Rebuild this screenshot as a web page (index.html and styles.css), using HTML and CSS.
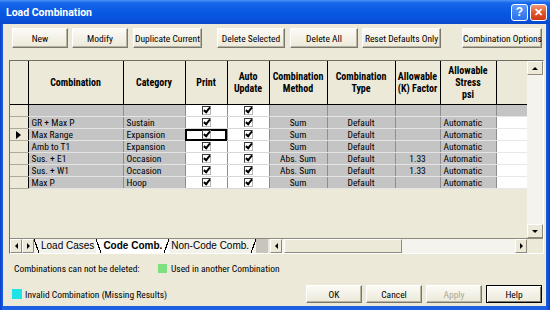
FILE: index.html
```html
<!DOCTYPE html>
<html>
<head>
    <title>Load Combination</title>
    <link rel="stylesheet" href="styles.css">
</head>
<body>
<div class="window">
    <div class="titlebar">
        <span class="title">Load Combination</span>
        <span class="cap cap-help">?</span>
        <span class="cap cap-close">&#x2715;</span>
    </div>
    <div class="client">
        <div class="toolbar">
            <button class="btn b-new">New</button>
            <button class="btn b-modify">Modify</button>
            <button class="btn b-dup">Duplicate Current</button>
            <button class="btn b-delsel">Delete Selected</button>
            <button class="btn b-delall">Delete All</button>
            <button class="btn b-reset">Reset Defaults Only</button>
            <button class="btn b-options">Combination Options</button>
        </div>

        <div class="grid">
            <div class="grid-main">
                <div class="grid-body">
                    <table class="sheet">
                        <colgroup>
                            <col style="width:18px">
                            <col style="width:95px">
                            <col style="width:62px">
                            <col style="width:42px">
                            <col style="width:42px">
                            <col style="width:58px">
                            <col style="width:68px">
                            <col style="width:45px">
                            <col style="width:56px">
                            <col style="width:31px">
                        </colgroup>
                        <thead>
                            <tr>
                                <th class="sel"></th>
                                <th>Combination</th>
                                <th>Category</th>
                                <th>Print</th>
                                <th>Auto<br>Update</th>
                                <th>Combination<br>Method</th>
                                <th>Combination<br>Type</th>
                                <th>Allowable<br>(K) Factor</th>
                                <th>Allowable<br>Stress<br>psi</th>
                                <th class="blank"></th>
                            </tr>
                        </thead>
                        <tbody>
                            <tr class="new-row">
                                <td class="sel"></td>
                                <td></td><td></td>
                                <td class="ck"><span class="chk"></span></td>
                                <td class="ck"><span class="chk"></span></td>
                                <td></td><td></td><td></td><td></td><td></td>
                            </tr>
                            <tr>
                                <td class="sel"></td>
                                <td>GR + Max P</td><td>Sustain</td>
                                <td class="ck"><span class="chk"></span></td>
                                <td class="ck"><span class="chk"></span></td>
                                <td class="c">Sum</td><td class="c">Default</td><td class="c"></td><td>Automatic</td>
                                <td class="empty"></td>
                            </tr>
                            <tr>
                                <td class="sel"><span class="ptr"></span></td>
                                <td>Max Range</td><td>Expansion</td>
                                <td class="ck focus"><span class="chk"></span></td>
                                <td class="ck"><span class="chk"></span></td>
                                <td class="c">Sum</td><td class="c">Default</td><td class="c"></td><td>Automatic</td>
                                <td class="empty"></td>
                            </tr>
                            <tr>
                                <td class="sel"></td>
                                <td>Amb to T1</td><td>Expansion</td>
                                <td class="ck"><span class="chk"></span></td>
                                <td class="ck"><span class="chk"></span></td>
                                <td class="c">Sum</td><td class="c">Default</td><td class="c"></td><td>Automatic</td>
                                <td class="empty"></td>
                            </tr>
                            <tr>
                                <td class="sel"></td>
                                <td>Sus. + E1</td><td>Occasion</td>
                                <td class="ck"><span class="chk"></span></td>
                                <td class="ck"><span class="chk"></span></td>
                                <td class="c">Abs. Sum</td><td class="c">Default</td><td class="c">1.33</td><td>Automatic</td>
                                <td class="empty"></td>
                            </tr>
                            <tr>
                                <td class="sel"></td>
                                <td>Sus. + W1</td><td>Occasion</td>
                                <td class="ck"><span class="chk"></span></td>
                                <td class="ck"><span class="chk"></span></td>
                                <td class="c">Abs. Sum</td><td class="c">Default</td><td class="c">1.33</td><td>Automatic</td>
                                <td class="empty"></td>
                            </tr>
                            <tr>
                                <td class="sel"></td>
                                <td>Max P</td><td>Hoop</td>
                                <td class="ck"><span class="chk"></span></td>
                                <td class="ck"><span class="chk"></span></td>
                                <td class="c">Sum</td><td class="c">Default</td><td class="c"></td><td>Automatic</td>
                                <td class="empty"></td>
                            </tr>
                        </tbody>
                    </table>
                </div>
                <div class="vscroll">
                    <span class="sb-btn"><span class="arr arr-up"></span></span>
                    <span class="sb-track"></span>
                    <span class="sb-btn"><span class="arr arr-down"></span></span>
                </div>
            </div>
            <div class="grid-foot">
                <span class="nav-btn"><span class="arr arr-left"></span></span>
                <span class="nav-btn"><span class="arr arr-right"></span></span>
                <div class="tabs">
                    <span class="edge edge-back"></span>
                    <span class="tab">Load Cases</span>
                    <span class="edge edge-back active"></span>
                    <span class="tab active">Code Comb.</span>
                    <span class="edge edge-fwd active"></span>
                    <span class="tab">Non-Code Comb.</span>
                    <span class="edge edge-fwd"></span>
                    <span class="tabs-rest"></span>
                </div>
                <div class="hscroll">
                    <span class="sb-btn"><span class="arr arr-left"></span></span>
                    <span class="sb-thumb"></span>
                    <span class="sb-track"></span>
                    <span class="sb-btn"><span class="arr arr-right"></span></span>
                </div>
                <span class="corner"></span>
            </div>
        </div>

        <div class="legend-row">
            <span class="legend-label">Combinations can not be deleted:</span>
            <span class="swatch swatch-green"></span>
            <span>Used in another Combination</span>
        </div>
        <div class="bottom-row">
            <span class="swatch swatch-cyan"></span>
            <span>Invalid Combination (Missing Results)</span>
            <div class="actions">
                <button class="btn act">OK</button>
                <button class="btn act">Cancel</button>
                <button class="btn act disabled">Apply</button>
                <button class="btn act default">Help</button>
            </div>
        </div>
    </div>
</div>
</body>
</html>
```

FILE: styles.css
```css
body {
    margin: 0;
    font-family: Roboto, "Liberation Sans", Arial, sans-serif;
    font-stretch: condensed;
    font-size: 9.5px;
    color: #000;
    background: #fff;
}

.window {
    width: 550px;
    height: 310px;
    display: flex;
    flex-direction: column;
    background: linear-gradient(to right, #0a3fc8, #1c5fe0 3px, #1c5fe0 546px, #0a3fc8);
}

/* title bar */
.titlebar {
    height: 24px;
    display: flex;
    align-items: center;
    padding: 0 3px 0 6px;
    background: linear-gradient(#4a92f8, #1667ea 12%, #0a5ae4 45%, #0752dc 80%, #0a48c8);
    color: #fff;
}

.title {
    flex: 1;
    font-stretch: normal;
    font-weight: bold;
    font-size: 10.5px;
}

.cap {
    width: 15px;
    height: 15px;
    margin-left: 2px;
    border: 1px solid #fff;
    border-radius: 3px;
    display: flex;
    align-items: center;
    justify-content: center;
    font-family: "Liberation Sans", Arial, sans-serif;
    font-weight: bold;
    font-size: 12px;
    color: #fff;
}

.cap-help {
    background: linear-gradient(#5d9bf9, #2a6fe8);
}

.cap-close {
    background: linear-gradient(#f09a7c, #e2562e 50%, #cc3a16);
    font-size: 11px;
}

/* dialog body */
.client {
    flex: 1;
    margin: 0 4px 4px 3px;
    background: #ece9d8;
    display: flex;
    flex-direction: column;
}

.btn {
    height: 20px;
    padding: 0;
    font-family: Roboto, "Liberation Sans", Arial, sans-serif;
    font-stretch: condensed;
    font-size: 9.5px;
    color: #000;
    background: linear-gradient(#fbfaf5, #ece9d8);
    border: 1px solid;
    border-color: #fff #7a776c #7a776c #fff;
    box-shadow: inset -1px -1px 0 #b7b3a3;
    white-space: nowrap;
}

.toolbar {
    display: flex;
    gap: 4px;
    padding: 4px 0 0 9px;
}

.b-new, .b-modify { width: 56px; }
.b-dup { width: 69px; margin-left: 1px; }
.b-delsel { width: 68px; margin-left: 11px; }
.b-delall { width: 68px; margin-left: 1px; }
.b-reset { width: 79px; }
.b-options { width: 80px; margin-left: 17px; }

/* grid */
.grid {
    margin: 12px 0 0 6px;
    width: 535px;
    height: 194px;
    box-sizing: border-box;
    border: 1px solid;
    border-color: #6f6d64 #fff #fff #6f6d64;
    display: flex;
    flex-direction: column;
}

.grid-main {
    flex: 1;
    display: flex;
    min-height: 0;
}

.grid-body {
    width: 517px;
    overflow: hidden;
    background: #ece9d8;
}

.sheet {
    width: 517px;
    table-layout: fixed;
    border-collapse: collapse;
}

.sheet th {
    height: 43px;
    padding: 0;
    line-height: 12px;
    font-size: 10px;
    font-weight: bold;
    text-align: center;
    background: #ece9d8;
    border-right: 1px solid #000;
    border-bottom: 1px solid #000;
    white-space: nowrap;
    overflow: hidden;
}

.sheet td {
    height: 11px;
    padding: 0 3px;
    line-height: 11px;
    background: #c4c4c4;
    border-right: 1px solid #8e8e8e;
    border-bottom: 1px solid #e4e4e4;
    white-space: nowrap;
    overflow: hidden;
}

.sheet td.c {
    text-align: center;
    padding: 0;
}

.sheet td.sel,
.sheet th.sel {
    background: #ece9d8;
    border-right: 1px solid #000;
    padding: 0 0 0 6px;
}

.sheet td.sel {
    border-bottom: 1px solid #aeab9c;
}

.sheet td.ck {
    background: #fff;
    text-align: center;
    padding: 0;
    border-bottom-color: #d8d8d8;
}

.sheet td.empty {
    background: #fff;
    border-bottom-color: #e8e8e8;
}

.sheet td.focus {
    outline: 2px solid #000;
    outline-offset: -2px;
}

.chk {
    display: inline-block;
    position: relative;
    width: 7px;
    height: 7px;
    vertical-align: -1px;
    background: #fff;
    border: 1px solid;
    border-color: #3a3a3a #b8b8b8 #b8b8b8 #3a3a3a;
}

.chk::after {
    content: "";
    position: absolute;
    left: 2px;
    top: -1px;
    width: 2px;
    height: 5px;
    border: solid #000;
    border-width: 0 2px 2px 0;
    transform: rotate(40deg);
}

.ptr {
    display: inline-block;
    border-left: 5px solid #000;
    border-top: 4px solid transparent;
    border-bottom: 4px solid transparent;
    vertical-align: -1px;
}

/* scrollbars */
.vscroll {
    width: 16px;
    display: flex;
    flex-direction: column;
    background: #f4f3ee;
}

.sb-btn {
    width: 14px;
    height: 12px;
    flex: none;
    display: flex;
    align-items: center;
    justify-content: center;
    background: #ece9d8;
    border: 1px solid;
    border-color: #fff #8e8b7d #8e8b7d #fff;
}

.sb-track {
    flex: 1;
    background: #f4f3ee;
}

.arr {
    width: 0;
    height: 0;
    border: 3px solid transparent;
}

.arr-up { border-bottom-color: #000; border-top-width: 0; }
.arr-down { border-top-color: #000; border-bottom-width: 0; }
.arr-left { border-right-color: #000; border-left-width: 0; }
.arr-right { border-left-color: #000; border-right-width: 0; }

.grid-foot {
    height: 14px;
    display: flex;
    background: #ece9d8;
    border-top: 1px solid #8e8b7d;
}

.nav-btn {
    width: 10px;
    height: 12px;
    display: flex;
    align-items: center;
    justify-content: center;
    border: 1px solid;
    border-color: #fff #8e8b7d #8e8b7d #fff;
}

.tabs {
    width: 234px;
    display: flex;
    align-items: stretch;
    font-family: "Liberation Sans", Arial, sans-serif;
    font-stretch: normal;
    font-size: 10px;
    line-height: 13px;
}

.tab {
    padding: 0 2px;
    background: #f2f1ea;
    white-space: nowrap;
}

.tab.active {
    background: #fff;
    font-weight: bold;
}

.edge {
    width: 5px;
    flex: none;
    background-color: #f2f1ea;
}

.edge.active {
    background-color: #fff;
}

.edge-back {
    background-image: linear-gradient(to top right, transparent 44%, #000 44%, #000 56%, transparent 56%);
}

.edge-fwd {
    background-image: linear-gradient(to bottom right, transparent 44%, #000 44%, #000 56%, transparent 56%);
}

.tabs-rest {
    flex: 1;
    background: #c8c6bc;
}

.hscroll {
    flex: 1;
    display: flex;
    margin-left: 2px;
    background: #f4f3ee;
}

.hscroll .sb-btn {
    width: 10px;
    height: 12px;
}

.sb-thumb {
    width: 116px;
    margin-left: 2px;
    background: #ece9d8;
    border: 1px solid;
    border-color: #fff #8e8b7d #8e8b7d #fff;
}

.corner {
    width: 16px;
    background: #ece9d8;
}

/* legend and dialog buttons */
.legend-row {
    display: flex;
    align-items: center;
    margin-top: 8px;
    padding-left: 11px;
    height: 13px;
}

.legend-label {
    width: 144px;
    white-space: nowrap;
}

.swatch {
    width: 9px;
    height: 9px;
    margin-right: 4px;
}

.swatch-green { background: #7fe07f; }

.swatch-cyan {
    width: 10px;
    height: 10px;
    background: #1ee4e8;
    margin-right: 3px;
}

.bottom-row {
    display: flex;
    align-items: center;
    margin-top: 10px;
    padding-left: 9px;
}

.actions {
    margin-left: auto;
    margin-right: 4px;
    display: flex;
    gap: 4px;
}

.act {
    width: 56px;
    height: 18px;
}

.act.disabled {
    color: #aca899;
}

.act.default {
    border: 1px solid #000;
    box-shadow: inset 1px 1px 0 #fff, inset -1px -1px 0 #7a776c;
}
```
